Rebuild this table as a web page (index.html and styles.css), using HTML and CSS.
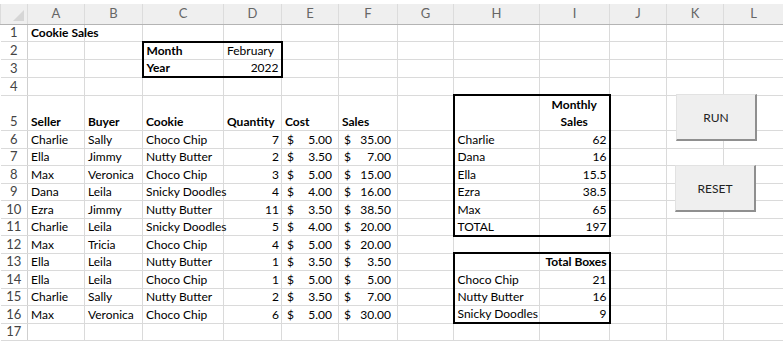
FILE: index.html
```html
<!DOCTYPE html>
<html>
<head>
    <title>Cookie Sales</title>
    <link rel="stylesheet" href="styles.css">
</head>
<body>
    <div class="sheet">
        <table class="grid">
            <colgroup>
                <col class="c-rh"><col class="c-a"><col class="c-b"><col class="c-c"><col class="c-d"><col class="c-e">
                <col class="c-f"><col class="c-g"><col class="c-h"><col class="c-i"><col class="c-j"><col class="c-k"><col class="c-l">
            </colgroup>
            <tr class="head">
                <th class="corner"><span class="tri"></span></th>
                <th>A</th><th>B</th><th>C</th><th>D</th><th>E</th><th>F</th><th>G</th><th>H</th><th>I</th><th>J</th><th>K</th><th>L</th>
            </tr>
            <tr class="r-top">
                <td class="rn">1</td>
                <td class="b ov">Cookie Sales</td><td></td><td></td><td></td><td></td><td></td><td></td><td></td><td></td><td></td><td></td><td></td>
            </tr>
            <tr class="r-top">
                <td class="rn">2</td>
                <td></td><td></td><td class="b bx-t bx-l">Month</td><td class="bx-t bx-r">February</td><td></td><td></td><td></td><td></td><td></td><td></td><td></td><td></td>
            </tr>
            <tr class="r-top">
                <td class="rn">3</td>
                <td></td><td></td><td class="b bx-b bx-l">Year</td><td class="num bx-b bx-r">2022</td><td></td><td></td><td></td><td></td><td></td><td></td><td></td><td></td>
            </tr>
            <tr class="r-top">
                <td class="rn">4</td>
                <td></td><td></td><td></td><td></td><td></td><td></td><td></td><td></td><td></td><td></td><td></td><td></td>
            </tr>
            <tr class="r-tall">
                <td class="rn">5</td>
                <td class="b">Seller</td><td class="b">Buyer</td><td class="b">Cookie</td><td class="b">Quantity</td><td class="b">Cost</td><td class="b">Sales</td><td></td>
                <td class="bx-t bx-l"></td><td class="b wrap bx-t bx-r">Monthly Sales</td><td></td><td></td><td></td>
            </tr>
            <tr>
                <td class="rn">6</td>
                <td>Charlie</td><td>Sally</td><td>Choco Chip</td><td class="num">7</td>
                <td><div class="acc"><span>$</span><span>5.00</span></div></td>
                <td><div class="acc"><span>$</span><span>35.00</span></div></td><td></td>
                <td class="bx-l">Charlie</td><td class="num bx-r">62</td><td></td><td></td><td></td>
            </tr>
            <tr>
                <td class="rn">7</td>
                <td>Ella</td><td>Jimmy</td><td>Nutty Butter</td><td class="num">2</td>
                <td><div class="acc"><span>$</span><span>3.50</span></div></td>
                <td><div class="acc"><span>$</span><span>7.00</span></div></td><td></td>
                <td class="bx-l">Dana</td><td class="num bx-r">16</td><td></td><td></td><td></td>
            </tr>
            <tr>
                <td class="rn">8</td>
                <td>Max</td><td>Veronica</td><td>Choco Chip</td><td class="num">3</td>
                <td><div class="acc"><span>$</span><span>5.00</span></div></td>
                <td><div class="acc"><span>$</span><span>15.00</span></div></td><td></td>
                <td class="bx-l">Ella</td><td class="num bx-r">15.5</td><td></td><td></td><td></td>
            </tr>
            <tr>
                <td class="rn">9</td>
                <td>Dana</td><td>Leila</td><td>Snicky Doodles</td><td class="num">4</td>
                <td><div class="acc"><span>$</span><span>4.00</span></div></td>
                <td><div class="acc"><span>$</span><span>16.00</span></div></td><td></td>
                <td class="bx-l">Ezra</td><td class="num bx-r">38.5</td><td></td><td></td><td></td>
            </tr>
            <tr>
                <td class="rn">10</td>
                <td>Ezra</td><td>Jimmy</td><td>Nutty Butter</td><td class="num">11</td>
                <td><div class="acc"><span>$</span><span>3.50</span></div></td>
                <td><div class="acc"><span>$</span><span>38.50</span></div></td><td></td>
                <td class="bx-l">Max</td><td class="num bx-r">65</td><td></td><td></td><td></td>
            </tr>
            <tr>
                <td class="rn">11</td>
                <td>Charlie</td><td>Leila</td><td>Snicky Doodles</td><td class="num">5</td>
                <td><div class="acc"><span>$</span><span>4.00</span></div></td>
                <td><div class="acc"><span>$</span><span>20.00</span></div></td><td></td>
                <td class="bx-l bx-b">TOTAL</td><td class="num bx-r bx-b">197</td><td></td><td></td><td></td>
            </tr>
            <tr>
                <td class="rn">12</td>
                <td>Max</td><td>Tricia</td><td>Choco Chip</td><td class="num">4</td>
                <td><div class="acc"><span>$</span><span>5.00</span></div></td>
                <td><div class="acc"><span>$</span><span>20.00</span></div></td><td></td>
                <td></td><td></td><td></td><td></td><td></td>
            </tr>
            <tr>
                <td class="rn">13</td>
                <td>Ella</td><td>Leila</td><td>Nutty Butter</td><td class="num">1</td>
                <td><div class="acc"><span>$</span><span>3.50</span></div></td>
                <td><div class="acc"><span>$</span><span>3.50</span></div></td><td></td>
                <td class="bx-l bx-t"></td><td class="b num bx-r bx-t ovl">Total Boxes</td><td></td><td></td><td></td>
            </tr>
            <tr>
                <td class="rn">14</td>
                <td>Ella</td><td>Leila</td><td>Choco Chip</td><td class="num">1</td>
                <td><div class="acc"><span>$</span><span>5.00</span></div></td>
                <td><div class="acc"><span>$</span><span>5.00</span></div></td><td></td>
                <td class="bx-l">Choco Chip</td><td class="num bx-r">21</td><td></td><td></td><td></td>
            </tr>
            <tr>
                <td class="rn">15</td>
                <td>Charlie</td><td>Sally</td><td>Nutty Butter</td><td class="num">2</td>
                <td><div class="acc"><span>$</span><span>3.50</span></div></td>
                <td><div class="acc"><span>$</span><span>7.00</span></div></td><td></td>
                <td class="bx-l">Nutty Butter</td><td class="num bx-r">16</td><td></td><td></td><td></td>
            </tr>
            <tr>
                <td class="rn">16</td>
                <td>Max</td><td>Veronica</td><td>Choco Chip</td><td class="num">6</td>
                <td><div class="acc"><span>$</span><span>5.00</span></div></td>
                <td><div class="acc"><span>$</span><span>30.00</span></div></td><td></td>
                <td class="bx-l bx-b">Snicky Doodles</td><td class="num bx-r bx-b">9</td><td></td><td></td><td></td>
            </tr>
            <tr>
                <td class="rn">17</td>
                <td></td><td></td><td></td><td></td><td></td><td></td><td></td><td></td><td></td><td></td><td></td><td></td>
            </tr>
        </table>

        <button class="macro-btn run-btn">RUN</button>
        <button class="macro-btn reset-btn">RESET</button>
    </div>
</body>
</html>
```

FILE: styles.css
```css
body {
    margin: 0;
    background: #fff;
    overflow: hidden;
    font-family: Lato, "Open Sans", sans-serif;
    font-size: 12px;
    color: #000;
}

.sheet {
    position: relative;
    width: 783px;
    height: 345px;
    padding-top: 4px;
    box-sizing: border-box;
    overflow: hidden;
}

.grid {
    table-layout: fixed;
    border-collapse: collapse;
    width: 783px;
}

.c-rh { width: 27px; }
.c-a { width: 57px; }
.c-b { width: 58px; }
.c-c { width: 81px; }
.c-d { width: 58px; }
.c-e { width: 57px; }
.c-f { width: 59px; }
.c-g { width: 56px; }
.c-h { width: 86px; }
.c-i { width: 70px; }
.c-j { width: 57px; }
.c-k { width: 57px; }
.c-l { width: 60px; }

.head th {
    height: 20px;
    padding: 0;
    background: #efefef;
    color: #666;
    font-weight: normal;
    font-size: 13px;
    line-height: 19px;
    border-left: 1px solid #dcdcdc;
    border-right: 1px solid #dcdcdc;
    border-bottom: 1px solid #b4b4b4;
    border-top: none;
    box-sizing: border-box;
}

.corner {
    position: relative;
}

.tri {
    position: absolute;
    right: 3px;
    bottom: 3px;
    width: 0;
    height: 0;
    border-left: 11px solid transparent;
    border-bottom: 11px solid #d6d6d6;
}

td {
    height: 17.5px;
    padding: 0 3px 1px;
    border: 1px solid #dadada;
    white-space: nowrap;
    overflow: visible;
    vertical-align: bottom;
    line-height: 15px;
    box-sizing: border-box;
}

.r-top td {
    height: 17.75px;
}

.r-tall td {
    height: 35px;
}

td.rn {
    padding: 0 0 1px;
    text-align: center;
    color: #444;
    font-size: 13px;
    border-left: none;
    border-right: 1px solid #cfcfcf;
    background: #fff;
}

.b {
    font-weight: bold;
}

.num {
    text-align: right;
    padding-right: 2px;
}

.ov {
    overflow: visible;
    max-width: 0;
}

.ovl {
    direction: rtl;
}

.wrap {
    white-space: normal;
    text-align: center;
    line-height: 17px;
    padding: 0 8px;
}

.acc {
    display: flex;
    justify-content: space-between;
    padding: 0 3px 0 2px;
}

.bx-t { border-top: 2px solid #000; }
.bx-b { border-bottom: 2px solid #000; }
.bx-l { border-left: 2px solid #000; }
.bx-r { border-right: 2px solid #000; }

.macro-btn {
    position: absolute;
    width: 81px;
    height: 47px;
    background: #efefef;
    border: 1px solid #e2e2e2;
    border-right: 2px solid #8f8f8f;
    border-bottom: 2px solid #8f8f8f;
    font-family: Lato, "Open Sans", sans-serif;
    font-size: 12px;
    color: #222;
    padding: 0;
}

.run-btn {
    left: 676px;
    top: 94px;
}

.reset-btn {
    left: 675px;
    top: 165px;
}
```
